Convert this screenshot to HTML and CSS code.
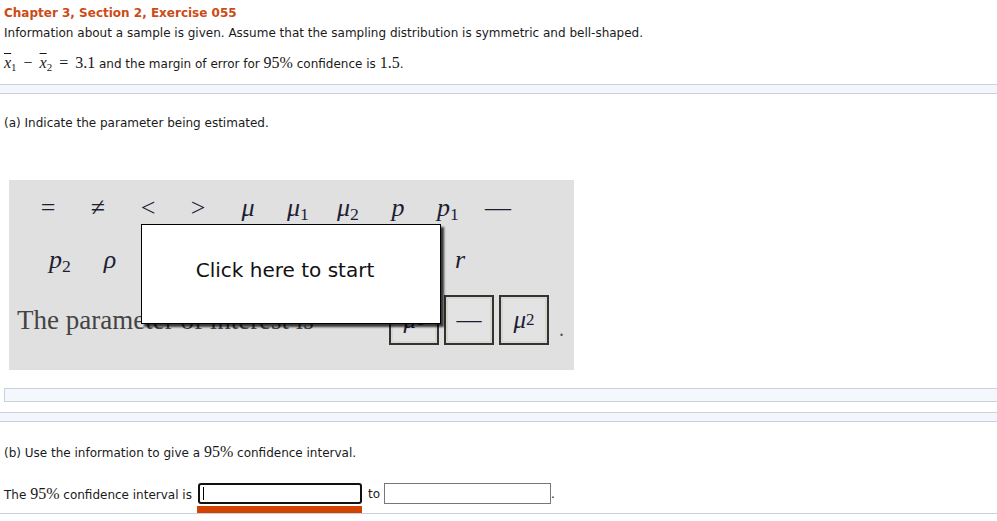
FILE: index.html
```html
<!DOCTYPE html>
<html>
<head>
<meta charset="utf-8">
<link rel="stylesheet" href="styles.css">
</head>
<body>
<div class="page">
  <div class="header">
    <div class="title">Chapter 3, Section 2, Exercise 055</div>
    <div class="intro">Information about a sample is given. Assume that the sampling distribution is symmetric and bell-shaped.</div>
    <div class="given"><span class="m"><span class="xbar">x</span><sub>1</sub><span class="op">−</span><span class="xbar">x</span><sub>2</sub><span class="op">=</span>3.1</span> and the margin of error for <span class="m">95%</span> confidence is <span class="m">1.5</span>.</div>
  </div>
  <div class="divider"></div>

  <div class="part-a">(a) Indicate the parameter being estimated.</div>
  <div class="palette">
    <div class="sym-row">
      <span class="sym">=</span>
      <span class="sym">≠</span>
      <span class="sym">&lt;</span>
      <span class="sym">&gt;</span>
      <span class="sym"><i>μ</i></span>
      <span class="sym"><i>μ</i><sub>1</sub></span>
      <span class="sym"><i>μ</i><sub>2</sub></span>
      <span class="sym"><i>p</i></span>
      <span class="sym"><i>p</i><sub>1</sub></span>
      <span class="sym">—</span>
    </div>
    <div class="sym-row row2">
      <span class="sym"><i>p</i><sub>2</sub></span>
      <span class="sym"><i>ρ</i></span>
      <span class="sym"></span>
      <span class="sym"></span>
      <span class="sym"></span>
      <span class="sym"></span>
      <span class="sym"></span>
      <span class="sym"></span>
      <span class="sym"><i>r</i></span>
    </div>
    <div class="answer-row">
      <span class="stem">The parameter of interest is</span>
      <span class="slots">
        <span class="slot"><i>μ</i><sub>1</sub></span>
        <span class="slot">—</span>
        <span class="slot"><i>μ</i><sub>2</sub></span>
      </span>
      <span class="dot">.</span>
    </div>
    <div class="start-overlay">Click here to start</div>
  </div>
  <div class="feedback-band"></div>
  <div class="divider thin"></div>

  <div class="part-b">(b) Use the information to give a <span class="m">95%</span> confidence interval.</div>
  <div class="interval-row">
    <span class="lbl">The <span class="m">95%</span> confidence interval is</span>
    <span class="field-wrap">
      <span class="field focused"><span class="caret"></span></span>
      <span class="field-bar"></span>
    </span>
    <span class="lbl to">to</span>
    <span class="field plain"></span>
    <span class="lbl">.</span>
  </div>
</div>
</body>
</html>
```

FILE: styles.css
```css
html, body {
  margin: 0;
  padding: 0;
  background: #ffffff;
}
.page {
  font-family: "DejaVu Sans", Verdana, sans-serif;
  font-size: 12px;
  color: #1a1a1a;
  border-bottom: 1px solid #c9d1de;
  width: 997px;
}
.header {
  padding: 4px 4px 0;
}
.title {
  color: #cc4b16;
  font-weight: bold;
  font-size: 12px;
  line-height: 18px;
}
.intro {
  margin-top: 2px;
  line-height: 18px;
}
.given {
  margin-top: 11px;
  line-height: 20px;
}
.m {
  font-family: "Liberation Serif", "Times New Roman", serif;
  font-size: 16px;
}
.m sub, .slot sub, .sym sub {
  font-size: 0.68em;
  vertical-align: -0.25em;
  line-height: 0;
}
.op {
  margin: 0 7px;
}
.xbar {
  font-style: italic;
  text-decoration: overline;
  text-decoration-thickness: 1px;
}
.divider {
  margin-top: 10px;
  height: 8px;
  background: #f3f6fa;
  border-top: 1px solid #c9d1de;
  border-bottom: 1px solid #c9d1de;
}
.part-a {
  padding: 20px 4px 0;
  line-height: 18px;
}
.palette {
  position: relative;
  margin: 48px 0 0 9px;
  width: 565px;
  height: 190px;
  box-sizing: border-box;
  background: #e0e0e0;
  padding-top: 14px;
  font-family: "Liberation Serif", "Times New Roman", serif;
  color: #1e1e32;
}
.sym-row {
  display: flex;
  align-items: center;
  height: 28px;
  font-size: 26px;
  margin-left: 14px;
}
.sym {
  width: 50px;
  text-align: center;
  flex: none;
}
.sym i {
  font-style: italic;
}
.row2 {
  margin-top: 24px;
  margin-left: 26px;
}
.answer-row {
  margin: 21px 0 0 8px;
  display: flex;
  align-items: center;
  height: 50px;
}
.stem {
  font-size: 27px;
  color: #444444;
  width: 372px;
  white-space: nowrap;
  overflow: hidden;
}
.slots {
  display: flex;
  gap: 5px;
}
.slot {
  width: 50px;
  height: 50px;
  box-sizing: border-box;
  border: 2px solid #333333;
  box-shadow: inset 0 0 0 2px #d8d6cc;
  background: #e3e3e3;
  display: flex;
  align-items: center;
  justify-content: center;
  font-size: 25px;
  color: #1e1e32;
}
.slot i {
  font-style: italic;
}
.dot {
  align-self: flex-end;
  margin: 0 0 6px 10px;
  font-size: 20px;
  color: #555;
  line-height: 20px;
}
.start-overlay {
  position: absolute;
  left: 132px;
  top: 44px;
  width: 300px;
  height: 100px;
  box-sizing: border-box;
  padding: 0 12px 8px 0;
  background: #ffffff;
  border: 1px solid #000000;
  box-shadow: 3px 3px 2px rgba(0, 0, 0, 0.75);
  display: flex;
  align-items: center;
  justify-content: center;
  font-family: "DejaVu Sans", Verdana, sans-serif;
  font-size: 20px;
  color: #111111;
}
.feedback-band {
  margin: 18px 0 0 4px;
  height: 12px;
  background: #f4f8fc;
  border: 1px solid #c9d1de;
  border-right: none;
}
.divider.thin {
  margin-top: 10px;
  height: 8px;
}
.part-b {
  padding: 21px 4px 0;
  line-height: 18px;
}
.interval-row {
  margin-top: 21px;
  padding-left: 4px;
  display: flex;
  align-items: flex-start;
  height: 30px;
}
.lbl {
  line-height: 22px;
  white-space: nowrap;
}
.lbl .m {
  font-size: 16px;
}
.field-wrap {
  margin-left: 6px;
  display: flex;
  flex-direction: column;
  width: 164px;
}
.field {
  display: block;
  height: 21px;
  box-sizing: border-box;
  background: #fff;
}
.field.focused {
  border: 2px solid #111111;
  border-radius: 3px;
  position: relative;
}
.caret {
  position: absolute;
  left: 3px;
  top: 2px;
  width: 1px;
  height: 13px;
  background: #000;
}
.field-bar {
  display: block;
  margin: 2px 0 0 -1px;
  height: 7px;
  background: #d24200;
}
.to {
  margin-left: 6px;
}
.field.plain {
  margin-left: 4px;
  width: 167px;
  border: 1px solid #777777;
}
```
